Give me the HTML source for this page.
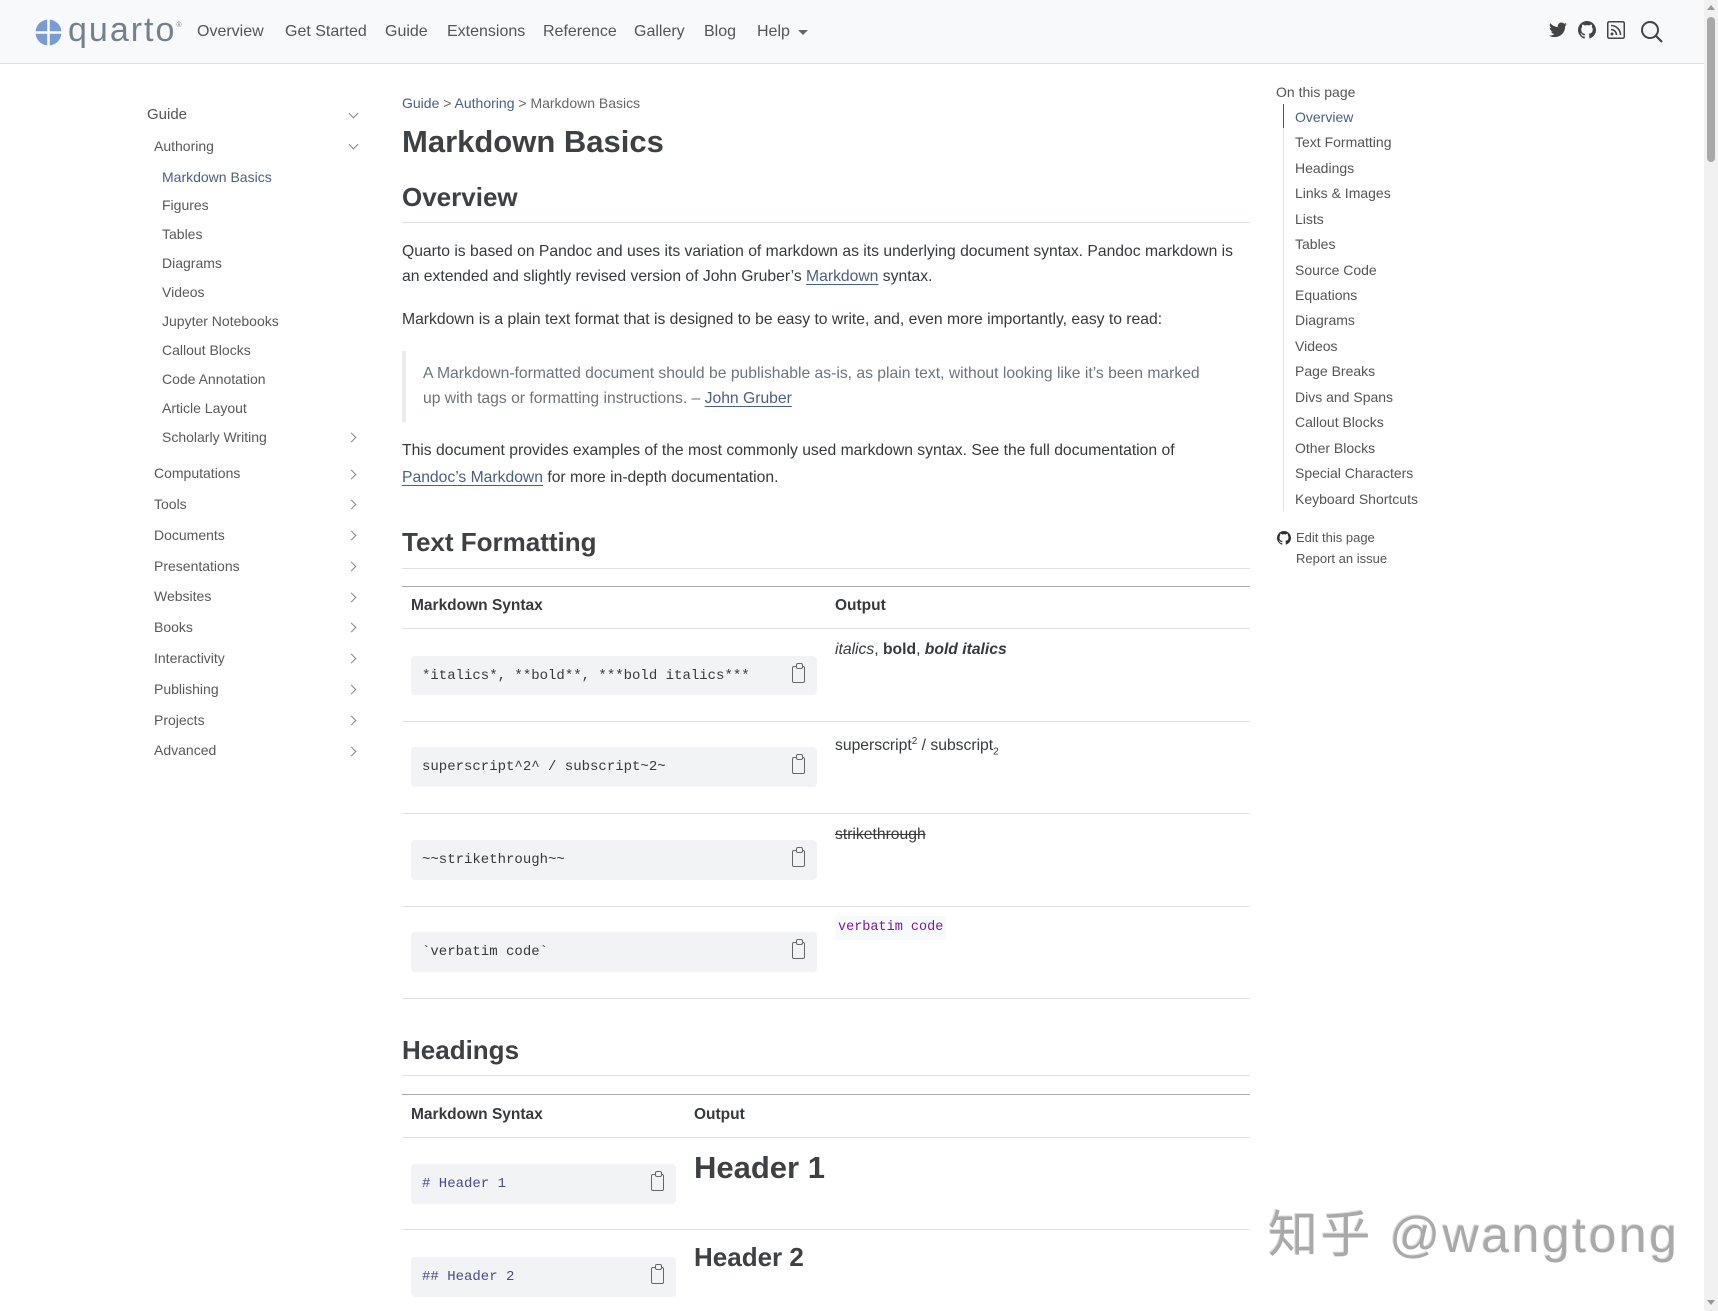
<!DOCTYPE html>
<html><head><meta charset="utf-8">
<style>
*{box-sizing:border-box;margin:0;padding:0}
body{width:1718px;height:1311px;overflow:hidden;background:#fff;font-family:"Liberation Sans",sans-serif;color:#373a3c;position:relative}
.t{position:absolute;white-space:nowrap;line-height:20px}
.nav{position:absolute;left:0;top:0;width:1704px;height:64px;background:#f8f9fa;border-bottom:1px solid #dee2e6}
.nv{font-size:16px;color:#545555;top:22px}
.sb{font-size:14px;color:#595959}
.chev{position:absolute;width:7px;height:7px;border-right:1px solid #888;border-bottom:1px solid #888}
.r{transform:rotate(-45deg)}
.d{transform:rotate(45deg)}
.p{font-size:15.7px;color:#373a3c}
a,.a{color:#4a5f85;text-decoration:underline;text-underline-offset:3px}
h1,h2{position:absolute;white-space:nowrap;font-weight:bold;color:#3d4144}
.hr{position:absolute;height:1px;background:#dee2e6}
.code{position:absolute;background:#f1f3f5;border-radius:4px;font-family:"Liberation Mono",monospace;font-size:14px;color:#373a3c;padding-left:11px;line-height:40px;white-space:nowrap}
.clip{position:absolute;right:12px;top:10px;width:13px;height:17px;border:1.3px solid #666;border-radius:2px}
.clip:after{content:"";position:absolute;left:3px;top:-4px;width:5px;height:4px;border:1.3px solid #666;border-radius:2px;background:#f1f3f5}
.th{font-size:15.5px;font-weight:bold;color:#373a3c}
.toc{font-size:14px;color:#555}
</style></head><body>

<div class="nav"></div>
<svg style="position:absolute;left:35px;top:19px" width="27" height="27" viewBox="0 0 27 27">
<circle cx="13.5" cy="13.5" r="13" fill="#7a9bd2"/>
<rect x="12.2" y="0" width="2.6" height="27" fill="#f8f9fa"/><rect x="0" y="12.2" width="27" height="2.6" fill="#f8f9fa"/></svg>
<div class="t" style="left:68px;top:10px;font-size:34px;line-height:40px;color:#75808f;letter-spacing:2px">quarto<span style="font-size:7px;vertical-align:top;position:relative;top:-4px;letter-spacing:0">®</span></div>
<div class="t nv" style="left:197px">Overview</div>
<div class="t nv" style="left:285px">Get Started</div>
<div class="t nv" style="left:385px">Guide</div>
<div class="t nv" style="left:447px">Extensions</div>
<div class="t nv" style="left:543px">Reference</div>
<div class="t nv" style="left:634px">Gallery</div>
<div class="t nv" style="left:704px">Blog</div>
<div class="t nv" style="left:757px">Help</div>
<div style="position:absolute;left:798px;top:30px;border-left:5px solid transparent;border-right:5px solid transparent;border-top:5px solid #666"></div>
<svg style="position:absolute;left:1549px;top:22px" width="18" height="16" viewBox="0 0 24 20"><path fill="#444" d="M24 2.4c-.9.4-1.8.6-2.8.8 1-.6 1.8-1.600 2.2-2.7-1 .6-2 1-3.1 1.2C19.3.7 18 0 16.6 0c-2.7 0-4.9 2.2-4.9 4.9 0 .4 0 .8.1 1.1C7.7 5.8 4.1 3.9 1.7.9c-.4.7-.7 1.6-.7 2.5 0 1.7.9 3.2 2.2 4.1-.8 0-1.6-.2-2.2-.6v.1c0 2.4 1.7 4.4 3.900 4.8-.4.1-.8.2-1.3.2-.3 0-.6 0-.9-.1.6 2 2.4 3.4 4.6 3.4-1.7 1.3-3.8 2.1-6.1 2.1-.4 0-.8 0-1.2-.1C2.2 18.7 4.8 19.5 7.5 19.5c9.1 0 14-7.5 14-14v-.6c1-.7 1.8-1.6 2.5-2.5z"/></svg>
<svg style="position:absolute;left:1578px;top:21px" width="18" height="18" viewBox="0 0 16 16"><path fill="#444" d="M8 0C3.6 0 0 3.6 0 8c0 3.5 2.3 6.5 5.5 7.6.4.1.5-.2.5-.4v-1.5c-2.2.5-2.7-1-2.7-1-.4-.9-.9-1.2-.9-1.2-.7-.5.1-.5.1-.5.8.1 1.2.8 1.2.8.7 1.3 1.9.9 2.3.7.1-.5.3-.9.5-1.1-1.8-.2-3.6-.9-3.6-4 0-.9.3-1.6.8-2.1-.1-.2-.4-1 .1-2.1 0 0 .7-.2 2.2.8.6-.2 1.3-.3 2-.3s1.4.1 2 .3c1.5-1 2.2-.8 2.2-.8.4 1.1.2 1.9.1 2.1.5.6.8 1.3.8 2.1 0 3.1-1.9 3.7-3.6 3.9.3.3.5.8.5 1.5v2.2c0 .2.1.5.6.4C13.7 14.5 16 11.5 16 8c0-4.4-3.6-8-8-8z"/></svg>
<svg style="position:absolute;left:1607px;top:21px" width="18" height="18" viewBox="0 0 18 18"><rect x="0.75" y="0.75" width="16.5" height="16.5" rx="1.5" fill="none" stroke="#444" stroke-width="1.5"/><circle cx="5" cy="13" r="1.5" fill="#444"/><path d="M4 8.5a5.5 5.5 0 0 1 5.5 5.5M4 4.5a9.5 9.5 0 0 1 9.5 9.5" fill="none" stroke="#444" stroke-width="1.6"/></svg>
<svg style="position:absolute;left:1640px;top:20px" width="24" height="24" viewBox="0 0 24 24"><circle cx="10" cy="10" r="8" fill="none" stroke="#444" stroke-width="2"/><path d="M16 16l6 6" stroke="#444" stroke-width="2.2"/></svg>

<div style="position:absolute;left:1704px;top:0;width:14px;height:1311px;background:#f1f1f1"></div>
<div style="position:absolute;left:1707px;top:17px;width:8px;height:145px;background:#a8a8a8;border-radius:4px"></div>
<div style="position:absolute;left:1707px;top:5px;border-left:4px solid transparent;border-right:4px solid transparent;border-bottom:5px solid #999"></div>
<div style="position:absolute;left:1707px;top:1300px;border-left:4px solid transparent;border-right:4px solid transparent;border-top:5px solid #999"></div>

<div class="t sb" style="left:147px;top:105px;font-size:15px;color:#555">Guide</div>
<div class="chev d" style="left:350px;top:110px"></div>
<div class="t sb" style="left:154px;top:136px">Authoring</div>
<div class="chev d" style="left:350px;top:141px"></div>
<div class="t sb" style="left:162px;top:167px;color:#4a5f85">Markdown Basics</div>
<div class="t sb" style="left:162px;top:195px">Figures</div>
<div class="t sb" style="left:162px;top:224px">Tables</div>
<div class="t sb" style="left:162px;top:253px">Diagrams</div>
<div class="t sb" style="left:162px;top:282px">Videos</div>
<div class="t sb" style="left:162px;top:311px">Jupyter Notebooks</div>
<div class="t sb" style="left:162px;top:340px">Callout Blocks</div>
<div class="t sb" style="left:162px;top:369px">Code Annotation</div>
<div class="t sb" style="left:162px;top:398px">Article Layout</div>
<div class="t sb" style="left:162px;top:427px">Scholarly Writing</div>
<div class="chev r" style="left:348px;top:434px"></div>
<div class="t sb" style="left:154px;top:463px">Computations</div><div class="chev r" style="left:348px;top:471px"></div>
<div class="t sb" style="left:154px;top:494px">Tools</div><div class="chev r" style="left:348px;top:501px"></div>
<div class="t sb" style="left:154px;top:525px">Documents</div><div class="chev r" style="left:348px;top:532px"></div>
<div class="t sb" style="left:154px;top:556px">Presentations</div><div class="chev r" style="left:348px;top:563px"></div>
<div class="t sb" style="left:154px;top:586px">Websites</div><div class="chev r" style="left:348px;top:594px"></div>
<div class="t sb" style="left:154px;top:617px">Books</div><div class="chev r" style="left:348px;top:624px"></div>
<div class="t sb" style="left:154px;top:648px">Interactivity</div><div class="chev r" style="left:348px;top:655px"></div>
<div class="t sb" style="left:154px;top:679px">Publishing</div><div class="chev r" style="left:348px;top:686px"></div>
<div class="t sb" style="left:154px;top:710px">Projects</div><div class="chev r" style="left:348px;top:717px"></div>
<div class="t sb" style="left:154px;top:740px">Advanced</div><div class="chev r" style="left:348px;top:748px"></div>

<div class="t" style="left:402px;top:93px;font-size:14px;color:#666"><span style="color:#4a5f85">Guide</span> &gt; <span style="color:#4a5f85">Authoring</span> &gt; Markdown Basics</div>
<h1 style="left:402px;top:122px;font-size:31px;line-height:40px">Markdown Basics</h1>
<h2 style="left:402px;top:180px;font-size:26px;line-height:34px">Overview</h2>
<div class="hr" style="left:402px;top:222px;width:848px"></div>
<div class="t p" style="left:402px;top:242px">Quarto is based on Pandoc and uses its variation of markdown as its underlying document syntax. Pandoc markdown is</div>
<div class="t p" style="left:402px;top:267px">an extended and slightly revised version of John Gruber’s <span class="a">Markdown</span> syntax.</div>
<div class="t p" style="left:402px;top:310px">Markdown is a plain text format that is designed to be easy to write, and, even more importantly, easy to read:</div>
<div style="position:absolute;left:402px;top:351px;width:4px;height:71px;background:#e9ecef"></div>
<div class="t p" style="left:423px;top:364px;color:#6c757d">A Markdown-formatted document should be publishable as-is, as plain text, without looking like it’s been marked</div>
<div class="t p" style="left:423px;top:389px;color:#6c757d">up with tags or formatting instructions. – <span class="a">John Gruber</span></div>
<div class="t p" style="left:402px;top:441px">This document provides examples of the most commonly used markdown syntax. See the full documentation of</div>
<div class="t p" style="left:402px;top:468px"><span class="a">Pandoc’s Markdown</span> for more in-depth documentation.</div>

<h2 style="left:402px;top:525px;font-size:26px;line-height:34px">Text Formatting</h2>
<div class="hr" style="left:402px;top:568px;width:848px"></div>
<div class="hr" style="left:402px;top:586px;width:848px;background:#aaa"></div>
<div class="t th" style="left:411px;top:596px">Markdown Syntax</div>
<div class="t th" style="left:835px;top:596px">Output</div>
<div class="hr" style="left:402px;top:628px;width:848px"></div>

<div class="code" style="left:411px;top:656px;width:406px;height:39px">*italics*, **bold**, ***bold italics***<div class="clip"></div></div>
<div class="t p" style="left:835px;top:640px"><i>italics</i>, <b>bold</b>, <b><i>bold italics</i></b></div>
<div class="hr" style="left:402px;top:721px;width:848px"></div>

<div class="code" style="left:411px;top:747px;width:406px;height:40px">superscript^2^ / subscript~2~<div class="clip"></div></div>
<div class="t p" style="left:835px;top:732px">superscript<sup style="font-size:10px">2</sup> / subscript<sub style="font-size:10px">2</sub></div>
<div class="hr" style="left:402px;top:813px;width:848px"></div>

<div class="code" style="left:411px;top:840px;width:406px;height:40px">~~strikethrough~~<div class="clip"></div></div>
<div class="t p" style="left:835px;top:825px;text-decoration:line-through">strikethrough</div>
<div class="hr" style="left:402px;top:906px;width:848px"></div>

<div class="code" style="left:411px;top:932px;width:406px;height:40px">`verbatim code`<div class="clip"></div></div>
<div class="t" style="left:835px;top:916px;font-family:'Liberation Mono',monospace;font-size:13.5px;color:#7a1aa0;background:#f8f9fa;padding:2px 3px">verbatim code</div>
<div class="hr" style="left:402px;top:998px;width:848px"></div>

<h2 style="left:402px;top:1033px;font-size:26px;line-height:34px">Headings</h2>
<div class="hr" style="left:402px;top:1075px;width:848px"></div>
<div class="hr" style="left:402px;top:1094px;width:848px;background:#aaa"></div>
<div class="t th" style="left:411px;top:1105px">Markdown Syntax</div>
<div class="t th" style="left:694px;top:1105px">Output</div>
<div class="hr" style="left:402px;top:1137px;width:848px"></div>
<div class="code" style="left:411px;top:1164px;width:265px;height:40px;color:#4a4a8a"># Header 1<div class="clip"></div></div>
<h1 style="left:694px;top:1148px;font-size:31px;line-height:40px">Header 1</h1>
<div class="hr" style="left:402px;top:1229px;width:848px"></div>
<div class="code" style="left:411px;top:1257px;width:265px;height:40px;color:#4a4a8a">## Header 2<div class="clip"></div></div>
<h2 style="left:694px;top:1240px;font-size:26px;line-height:34px">Header 2</h2>

<div class="t toc" style="left:1276px;top:82px">On this page</div>
<div style="position:absolute;left:1283px;top:104px;width:1px;height:407px;background:#dee2e6"></div>
<div style="position:absolute;left:1283px;top:104px;width:1px;height:24px;background:#555"></div>
<div class="t toc" style="left:1295px;top:107px;color:#4a5f85">Overview</div>
<div class="t toc" style="left:1295px;top:132px">Text Formatting</div>
<div class="t toc" style="left:1295px;top:158px">Headings</div>
<div class="t toc" style="left:1295px;top:183px">Links &amp; Images</div>
<div class="t toc" style="left:1295px;top:209px">Lists</div>
<div class="t toc" style="left:1295px;top:234px">Tables</div>
<div class="t toc" style="left:1295px;top:260px">Source Code</div>
<div class="t toc" style="left:1295px;top:285px">Equations</div>
<div class="t toc" style="left:1295px;top:310px">Diagrams</div>
<div class="t toc" style="left:1295px;top:336px">Videos</div>
<div class="t toc" style="left:1295px;top:361px">Page Breaks</div>
<div class="t toc" style="left:1295px;top:387px">Divs and Spans</div>
<div class="t toc" style="left:1295px;top:412px">Callout Blocks</div>
<div class="t toc" style="left:1295px;top:438px">Other Blocks</div>
<div class="t toc" style="left:1295px;top:463px">Special Characters</div>
<div class="t toc" style="left:1295px;top:489px">Keyboard Shortcuts</div>
<svg style="position:absolute;left:1277px;top:531px" width="14" height="14" viewBox="0 0 16 16"><path fill="#333" d="M8 0C3.6 0 0 3.6 0 8c0 3.5 2.3 6.5 5.5 7.6.4.1.5-.2.5-.4v-1.5c-2.2.5-2.7-1-2.7-1-.4-.9-.9-1.2-.9-1.2-.7-.5.1-.5.1-.5.8.1 1.2.8 1.2.8.7 1.3 1.9.9 2.3.7.1-.5.3-.9.5-1.1-1.8-.2-3.600-.9-3.600-4 0-.9.3-1.6.8-2.1-.1-.2-.4-1 .1-2.1 0 0 .7-.2 2.2.8.6-.2 1.3-.3 2-.3s1.4.1 2 .3c1.5-1 2.2-.8 2.2-.8.4 1.1.2 1.9.1 2.1.5.6.8 1.3.8 2.1 0 3.1-1.9 3.7-3.6 3.9.3.3.5.8.5 1.5v2.2c0 .2.1.5.6.4C13.7 14.5 16 11.5 16 8c0-4.4-3.6-8-8-8z"/></svg>
<div class="t" style="left:1296px;top:528px;font-size:13px;color:#555">Edit this page</div>
<div class="t" style="left:1296px;top:549px;font-size:13px;color:#555">Report an issue</div>

<div class="t" style="left:1268px;top:1206px;font-family:'Liberation Sans','Noto Sans CJK SC',sans-serif;font-size:50px;line-height:58px;letter-spacing:2.5px;color:#a9a9a9;text-shadow:1px 1px 0 #fff,-1px -1px 0 #ddd">知乎 @wangtong</div>
</body></html>
